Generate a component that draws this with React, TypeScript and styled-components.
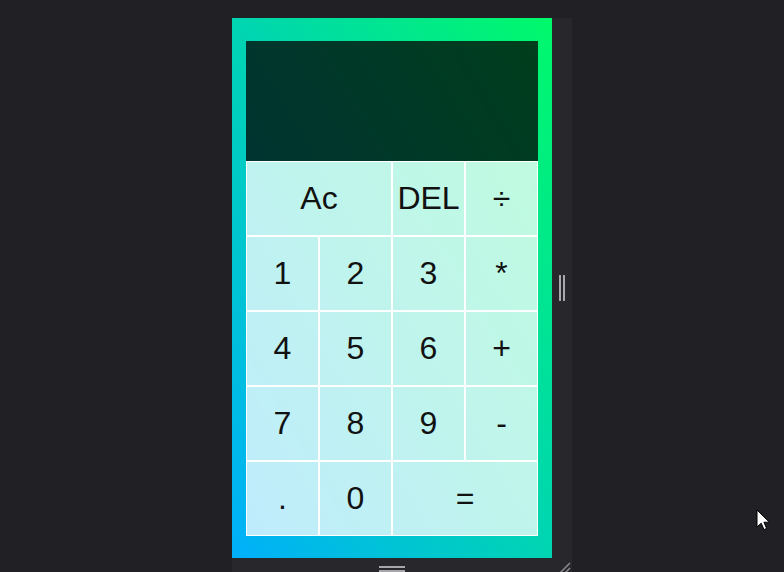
import React from 'react';
import styled, { createGlobalStyle } from 'styled-components';

const Global = createGlobalStyle`
  html, body { margin: 0; padding: 0; background: #212125; height: 100%; overflow: hidden; }
  #root { height: 100%; }
`;

const Stage = styled.div`
  position: relative;
  width: 784px;
  height: 572px;
  padding: 18px 0 0 232px;
  box-sizing: border-box;
`;

const Frame = styled.div`
  display: grid;
  grid-template-columns: 320px 20px;
  grid-template-rows: 540px 14px;
`;

const Calculator = styled.div`
  background: linear-gradient(to top right, #00b0fb, #00f96a);
  padding: 23px 14px 22px;
  box-sizing: border-box;
  display: flex;
  flex-direction: column;
`;

const Screen = styled.div`
  height: 120px;
  background: rgba(0, 0, 0, 0.75);
`;

const Keys = styled.div`
  display: grid;
  grid-template-columns: repeat(4, 73px);
  grid-auto-rows: 75px;
`;

const Key = styled.button<{ $span?: number }>`
  grid-column: span ${(p) => p.$span ?? 1};
  margin: 0;
  padding: 0;
  border: 1px solid #ffffff;
  background: rgba(255, 255, 255, 0.75);
  font-family: "Liberation Sans", Arial, sans-serif;
  font-size: 32px;
  color: #111111;
  cursor: pointer;
  outline: none;
`;

const Gutter = styled.div<{ $dir: 'v' | 'h' | 'c' }>`
  background: #28282c;
  display: flex;
  align-items: ${(p) => (p.$dir === 'c' ? 'flex-end' : 'center')};
  justify-content: ${(p) => (p.$dir === 'c' ? 'flex-end' : 'center')};
  gap: 2px;
  flex-direction: ${(p) => (p.$dir === 'h' ? 'column' : 'row')};
  padding-top: ${(p) => (p.$dir === 'h' ? '7px' : '0')};
  box-sizing: border-box;
`;

const GripBar = styled.span<{ $dir: 'v' | 'h' }>`
  display: block;
  background: #a8a8ac;
  width: ${(p) => (p.$dir === 'v' ? '2px' : '26px')};
  height: ${(p) => (p.$dir === 'v' ? '26px' : '2px')};
`;

const Cursor = styled.svg`
  position: absolute;
  left: 756px;
  top: 509px;
`;

const keys: { label: string; span?: number }[] = [
  { label: 'Ac', span: 2 },
  { label: 'DEL' },
  { label: '÷' },
  { label: '1' },
  { label: '2' },
  { label: '3' },
  { label: '*' },
  { label: '4' },
  { label: '5' },
  { label: '6' },
  { label: '+' },
  { label: '7' },
  { label: '8' },
  { label: '9' },
  { label: '-' },
  { label: '.' },
  { label: '0' },
  { label: '=', span: 2 },
];

export default function App() {
  return (
    <>
      <Global />
      <Stage>
        <Frame>
          <Calculator>
            <Screen />
            <Keys>
              {keys.map((k, i) => (
                <Key key={i} $span={k.span}>
                  {k.label}
                </Key>
              ))}
            </Keys>
          </Calculator>
          <Gutter $dir="v">
            <GripBar $dir="v" />
            <GripBar $dir="v" />
          </Gutter>
          <Gutter $dir="h">
            <GripBar $dir="h" />
            <GripBar $dir="h" />
          </Gutter>
          <Gutter $dir="c">
            <svg width="14" height="12" viewBox="0 0 14 12">
              <path d="M2 13 L12 3 M7 13 L12 8" stroke="#8a8a8e" strokeWidth="1.5" fill="none" />
            </svg>
          </Gutter>
        </Frame>
        <Cursor width="16" height="24" viewBox="0 0 16 24">
          <path
            d="M1 1 L1 18 L5.2 14.2 L8 20.6 L10.6 19.4 L7.9 13.2 L13.4 13.2 Z"
            fill="#ffffff"
            stroke="#000000"
            strokeWidth="1"
            strokeLinejoin="round"
          />
        </Cursor>
      </Stage>
    </>
  );
}
